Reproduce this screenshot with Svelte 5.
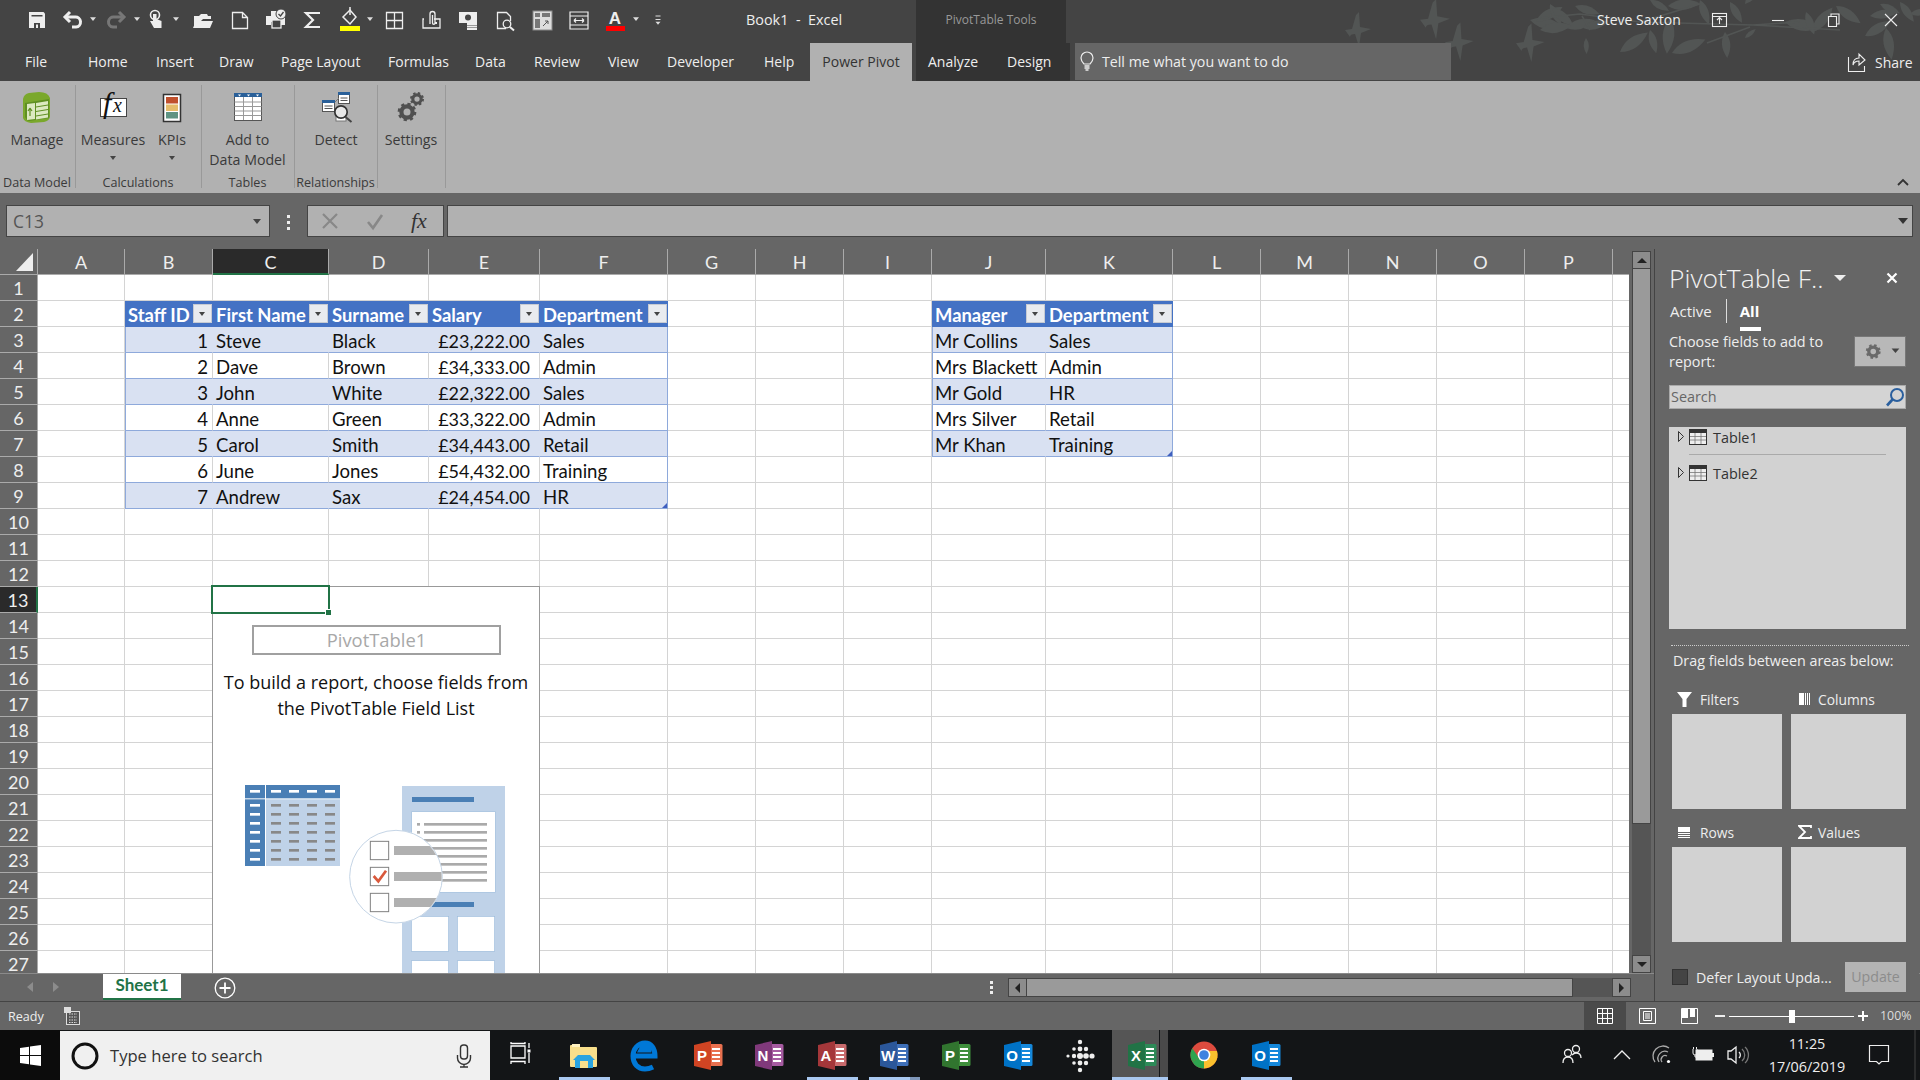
<script>
  const tabs = [
    ['File', 25, 63], ['Home', 88, 68], ['Insert', 156, 63], ['Draw', 219, 62], ['Page Layout', 281, 107],
    ['Formulas', 388, 87], ['Data', 475, 59], ['Review', 534, 74], ['View', 608, 59], ['Developer', 667, 97],
    ['Help', 764, 46]
  ];
  const groups = [
    { w: 76, label: 'Data Model', btns: [{ w: 74, t: ['Manage'], icon: 'manage' }] },
    { w: 126, label: 'Calculations', btns: [{ w: 74, t: ['Measures'], icon: 'fx', caret: true }, { w: 44, t: ['KPIs'], icon: 'kpi', caret: true }] },
    { w: 93, label: 'Tables', btns: [{ w: 91, t: ['Add to', 'Data Model'], icon: 'table' }] },
    { w: 83, label: 'Relationships', btns: [{ w: 82, t: ['Detect'], icon: 'detect' }] },
    { w: 68, label: '', btns: [{ w: 66, t: ['Settings'], icon: 'settings' }] }
  ];
  const edges = [38, 125, 213, 329, 429, 540, 668, 756, 844, 932, 1046, 1173, 1261, 1349, 1437, 1525, 1613, 1700];
  const colNames = 'ABCDEFGHIJKLMNOP '.split('');
  const colTemplate = '38px ' + edges.slice(1).map((e, i) => e - edges[i] + 'px').join(' ');
  const rows = Array.from({ length: 27 }, (_, i) => i + 1);

  const t1 = [
    ['Staff ID', 'First Name', 'Surname', 'Salary', 'Department'],
    ['1', 'Steve', 'Black', '£23,222.00', 'Sales'],
    ['2', 'Dave', 'Brown', '£34,333.00', 'Admin'],
    ['3', 'John', 'White', '£22,322.00', 'Sales'],
    ['4', 'Anne', 'Green', '£33,322.00', 'Admin'],
    ['5', 'Carol', 'Smith', '£34,443.00', 'Retail'],
    ['6', 'June', 'Jones', '£54,432.00', 'Training'],
    ['7', 'Andrew', 'Sax', '£24,454.00', 'HR']
  ];
  const t2 = [
    ['Manager', 'Department'],
    ['Mr Collins', 'Sales'],
    ['Mrs Blackett', 'Admin'],
    ['Mr Gold', 'HR'],
    ['Mrs Silver', 'Retail'],
    ['Mr Khan', 'Training']
  ];

  function cell(c, r) {
    const tables = [
      { data: t1, c0: 1, right: [0, 3] },
      { data: t2, c0: 9, right: [] }
    ];
    for (const t of tables) {
      const x = c - t.c0, y = r - 2;
      const nc = t.data[0].length;
      if (x >= 0 && x < nc && y >= 0 && y < t.data.length) {
        const cl = ['tc'];
        if (y === 0) cl.push('th');
        else if (y % 2 === 1) cl.push('band');
        if (x === 0) cl.push('tfirst');
        if (x === nc - 1) cl.push('tlast');
        if (y > 0 && t.right.includes(x)) cl.push(x === 3 ? 'money' : 'num');
        if (x === nc - 1 && y === t.data.length - 1) cl.push('corner');
        return { text: t.data[y][x], cls: cl.join(' '), head: y === 0 };
      }
    }
    return { text: '', cls: '', head: false };
  }

  const leaves = [
    [1530,20,34,12],[1536,21,30,-28],[1550,4,24,62],[1552,8,28,40],[1566,28,30,-15],[1540,30,32,-8],[1575,6,26,18],[1583,28,26,-14],
    [1586,38,16,88],[1620,52,34,-35],[1650,30,24,75],[1670,18,36,95],[1672,53,36,-22],[1725,32,26,85],[1745,38,14,-40],
    [1668,6,32,-5],[1700,0,26,70],[1730,2,24,60],[1745,4,22,-50],[1650,0,22,30],[1785,22,36,10],[1812,32,32,-50],[1806,12,24,70],
    [1836,6,30,35],[1865,36,30,-30],[1870,16,28,-8],[1886,28,32,80],[1900,2,24,55],[1880,4,22,25],[1910,14,20,-10]
  ];
  const birds = [[1345,18,1],[1420,6,1.15],[1445,29,1.1],[1516,30,1.1]];
  const qatCarets = [93, 137, 176, 370, 636];

  const apps = [
    { x: 708, c: '#d04423', d: '#e8704f', l: 'P' },
    { x: 769, c: '#80397b', d: '#a65ba1', l: 'N' },
    { x: 832, c: '#a4373a', d: '#c86a6c', l: 'A' },
    { x: 894, c: '#2b579a', d: '#3e6fb8', l: 'W' },
    { x: 956, c: '#31752f', d: '#3f8f3c', l: 'P' },
    { x: 1018, c: '#0072c6', d: '#1588db', l: 'O' },
    { x: 1142, c: '#217346', d: '#2d8a57', l: 'X' },
    { x: 1266, c: '#0072c6', d: '#1588db', l: 'O' }
  ];
  const unders = [[559, 51], [807, 51], [869, 41], [1112, 56], [1241, 51]];
  const fit = [
    [1080,1042,2.2],[1080,1049,2.4],[1080,1056,3],[1080,1063,2.4],[1080,1070,2.2],
    [1074,1049,1.8],[1074,1056,2.2],[1074,1063,1.8],[1068,1056,1.6],
    [1086,1049,2.2],[1086,1056,2.8],[1086,1063,2.2],[1092,1056,2.6]
  ];
  const dashRows = [706, 733, 760, 787, 814, 841, 868];
  const dashCols = [213, 267, 321, 375];
  const docLines = [763, 787, 811, 835, 859, 883, 907, 931];
</script>

{#snippet gear(x, y, r, c)}
  <circle cx={x} cy={y} r={r} fill="none" stroke={c} stroke-width={r * 0.75} />
  <circle cx={x} cy={y} r={r * 1.42} fill="none" stroke={c} stroke-width={r * 0.5} stroke-dasharray="{r * 0.56} {r * 0.56}" />
{/snippet}

{#snippet tri(x, y, s, c)}
  <path d="M{x - s} {y - s * 0.55}h{s * 2}L{x} {y + s * 0.65}z" fill={c} />
{/snippet}

{#snippet ribbonIcon(name)}
  <svg class="ri" viewBox="0 0 40 32" width="40" height="32">
    {#if name === 'manage'}
      <path d="M6 7Q7 2 12 1L22 0Q31 0 33 6V25Q32 29 27 30L14 31Q7 30 6 26z" fill="#7aa82b" />
      <path d="M8 11L32 7V26L12 29Q9 28 8 25z" fill="#5f8f22" />
      <path d="M10 12l8-1v16l-8 1zM19 11l12-2v3.500l-12 2zM19 15.500l12-2v3.500l-12 2zM19 20l12-2v3.500l-12 2zM19 24.500l12-2v3l-12 2z" fill="#dce9c0" />
      <path d="M13 24v-8M13 16l-2 3M13 16l2 3" stroke="#5f8f22" stroke-width="1.200" fill="none" />
    {:else if name === 'fx'}
      <rect x="7.500" y="6.500" width="26" height="18" fill="#fff" stroke="#444" />
      <text x="10" y="21" class="fxt">f</text>
      <text x="20" y="20" class="fxs">x</text>
    {:else if name === 'kpi'}
      <rect x="11.500" y="2.500" width="17" height="27" fill="#fff" stroke="#333" stroke-width="1.500" />
      <rect x="14" y="5" width="12" height="6.500" fill="#c0502d" />
      <rect x="14" y="12.500" width="12" height="6.500" fill="#e6bd6b" />
      <rect x="14" y="20" width="12" height="6.500" fill="#5f9483" />
    {:else if name === 'table'}
      <rect x="6.500" y="1.500" width="27" height="27" fill="#fff" stroke="#555" />
      <rect x="6" y="1" width="28" height="4" fill="#2a6099" />
      <path d="M6.500 10h27M6.500 14.500h27M6.500 19h27M6.500 23.500h27M15.500 5v23M24.500 5v23" stroke="#999" fill="none" />
      <path d="M10 2.500h3l-1.500 2zM19 2.500h3l-1.500 2zM28 2.500h3l-1.500 2z" fill="#fff" />
    {:else if name === 'detect'}
      <rect x="6.500" y="8.500" width="12" height="11" fill="#fff" stroke="#555" />
      <rect x="6" y="8" width="13" height="3" fill="#2a6099" />
      <path d="M8.500 14h8M8.500 16.500h8" stroke="#555" />
      <rect x="22.500" y="0.500" width="11" height="11" fill="#fff" stroke="#555" />
      <rect x="22" y="0" width="12" height="3" fill="#2a6099" />
      <path d="M24.500 6h7M24.500 8.500h7" stroke="#555" />
      <path d="M19 10L23 6" stroke="#777" />
      <rect x="20" y="22" width="10" height="7" fill="#fff" stroke="#777" />
      <circle cx="25" cy="20" r="6.200" fill="#e8e8e8" stroke="#333" stroke-width="1.700" />
      <path d="M29.500 25l6 5" stroke="#444" stroke-width="2" />
    {:else if name === 'settings'}
      {@render gear(16, 20, 5.600, '#505050')}
      {@render gear(26, 7, 4.200, '#505050')}
    {/if}
  </svg>
{/snippet}

{#snippet office(a)}
  <path d="M{a.x - 2} 1044h15a1.500 1.500 0 0 1 1.500 1.500v19a1.500 1.500 0 0 1-1.500 1.500h-15z" fill={a.d} />
  <path d="M{a.x + 4} 1049h8M{a.x + 4} 1053h8M{a.x + 4} 1057h8M{a.x + 4} 1061h8" stroke="#fff" stroke-width="2" />
  <path d="M{a.x - 14} 1045L{a.x + 3} 1041V1070L{a.x - 14} 1066z" fill={a.c} />
  <text x={a.x - 6} y="1061" text-anchor="middle" class="appl">{a.l}</text>
{/snippet}

<div class="app">
  <div class="chrome">
    <svg class="deco" viewBox="1320 0 600 81" width="600" height="81" aria-hidden="true">
      <g fill="#525554" stroke="none">
        {#each leaves as l}
          <path d="M0 0Q{l[2] * 0.45} {-l[2] * 0.32} {l[2]} 0Q{l[2] * 0.45} {l[2] * 0.32} 0 0z" transform="translate({l[0]} {l[1]}) rotate({l[3]})" />
        {/each}
        {#each birds as b}
          <path d="M0 12L7 11L11 -3L14 -6L15 9L26 11L16 15L14 29L10 16Q5 16 5 19z" transform="translate({b[0]} {b[1]}) scale({b[2]})" />
        {/each}
      </g>
      <path d="M1540 18L1580 14L1640 22L1753 25L1840 30M1640 22L1700 4M1707 43L1750 27M1582 16L1590 30M1753 25L1800 22" stroke="#525554" stroke-width="1.600" fill="none" />
    </svg>
    <header class="title">
      <svg class="qat" viewBox="0 0 680 40" width="680" height="40" aria-hidden="true">
        <g transform="translate(37 20)">
          <path d="M-8-8H6.500L8-6.500V8H-8z" fill="#eee" />
          <rect x="-5.500" y="-5" width="11" height="1.500" fill="#444" />
          <rect x="-3" y="3" width="6" height="5" fill="#444" />
          <rect x="-1" y="4.500" width="2" height="3.500" fill="#eee" />
        </g>
        <g transform="translate(73 20)" fill="none" stroke="#eee" stroke-width="3">
          <path d="M-7-3H2a5 5 0 0 1 1 10H-1" /><path d="M-3-8L-8-3L-3 2" />
        </g>
        <g transform="translate(116 20)" fill="none" stroke="#777" stroke-width="3">
          <path d="M7-3H-2a5 5 0 0 0-1 10H1" /><path d="M3-8L8-3L3 2" />
        </g>
        <g transform="translate(156 20)" fill="#eee">
          <circle cx="-1" cy="-5" r="4.500" fill="none" stroke="#eee" stroke-width="1.600" />
          <path d="M-3-6h3.500v5l5 2v7h-7.500L-6 1h3z" />
        </g>
        <path d="M194 28V16h5l2-2h6l1 2h3v3h-8l-2 2H196z M193 28l3-7h17l-3 7z" fill="#eee" />
        <path d="M232.500 12.500h10l5 5v11h-15z M242.500 12.500v5h5" fill="none" stroke="#eee" stroke-width="1.300" />
        <g transform="translate(276 20)">
          <path d="M-10-4h5v-5h10v5h4v9h-5v-3h-9v3h-5z" fill="#eee" />
          <rect x="-4" y="0" width="9" height="8" fill="#444" stroke="#eee" stroke-width="1.300" />
          <circle cx="5" cy="-6" r="5" fill="#eee" stroke="#444" />
          <path d="M2.500-6l2 2 3-4" stroke="#444" fill="none" stroke-width="1.300" />
        </g>
        <path d="M320 13H306L313 20L306 27H320" fill="none" stroke="#eee" stroke-width="2.200" />
        <g transform="translate(350 17)" fill="none" stroke="#eee" stroke-width="1.500">
          <path d="M-7 0L0-7L6 0L0 7z" /><path d="M0-2V-10" />
        </g>
        <rect x="340" y="26" width="20" height="5" fill="#ff0" />
        <path d="M386.500 12.500h16v16h-16zM394.500 12.500v16M386.500 20.500h16" fill="none" stroke="#eee" stroke-width="1.300" />
        <g fill="none" stroke="#eee" stroke-width="1.300">
          <path d="M424 19h-1v9h17v-9h-6" /><path d="M430 24V14a2.500 2.500 0 0 1 5 0v9a1.200 1.200 0 0 1-2.500 0v-8" />
        </g>
        <rect x="435" y="22" width="2" height="2" fill="#eee" />
        <g transform="translate(468 20)">
          <rect x="-9" y="-8" width="18" height="11" fill="#eee" />
          <circle cx="0" cy="-2.500" r="3" fill="#444" />
          <path d="M-1 4h10M-1 6.500h10M-1 9h10" stroke="#eee" stroke-width="1.800" />
        </g>
        <g fill="none" stroke="#eee" stroke-width="1.300">
          <path d="M506 28.500h-8.500v-16h9l4 4V21" />
          <circle cx="507" cy="24" r="3.800" /><path d="M510 27l4 3.500" stroke-width="2" />
        </g>
        <rect x="533" y="11" width="19" height="19" fill="#ddd" stroke="#888" />
        <rect x="535" y="13" width="5" height="4" fill="#777" /><rect x="535" y="19" width="5" height="9" fill="#777" /><rect x="542" y="13" width="8" height="4" fill="#777" />
        <path d="M543 26l5-5M548 21v3M548 21h-3" stroke="#555" fill="none" />
        <path d="M570 12h18v17h-18zM570 16h18M570 25h18M574 20.500h10M574 20.500l2-2M574 20.500l2 2M584 20.500l-2-2M584 20.500l-2 2" fill="none" stroke="#eee" stroke-width="1.200" />
        <text x="615" y="24" text-anchor="middle" class="qa">A</text>
        <rect x="606" y="26" width="19" height="5" fill="#f00" />
        {#each qatCarets as c}
          {@render tri(c, 19, 3, '#ddd')}
        {/each}
        <path d="M655.500 16h5M655.500 19.500h5" stroke="#ddd" /> {@render tri(658, 23, 2.500, '#ddd')}
      </svg>
      <span class="book">Book1&nbsp; -&nbsp; Excel</span>
      <div class="ctx">PivotTable Tools</div>
      <span class="user">Steve Saxton</span>
      <svg class="winbtn" viewBox="0 0 210 30" width="210" height="30" aria-hidden="true">
        <g fill="none" stroke="#eee" stroke-width="1.100">
          <rect x="5.500" y="8.500" width="14" height="13" /><path d="M5.500 11.500h14M12.500 19v-6M10 15l2.500-2.500L15 15" />
          <path d="M65 15.500h12" />
          <path d="M121.500 11.500h8v10h-8zM124 11V9h8v10h-2" />
          <path d="M178 9l12 12M190 9l-12 12" />
        </g>
      </svg>
    </header>

    <nav class="tabs">
      <div class="tabpad"></div>
      {#each tabs as t}
        <span class="tab" style="width:{t[2]}px">{t[0]}</span>
      {/each}
      <span class="tab active">Power Pivot</span>
      <div class="ctxtabs">
        <span class="tab" style="width:79px">Analyze</span>
        <span class="tab" style="width:59px">Design</span>
      </div>
      <div class="tell">
        <svg viewBox="0 0 16 22" width="16" height="22" aria-hidden="true">
          <path d="M5 14C3 12 2 10 2 8a6 6 0 0 1 12 0c0 2-1 4-3 6z" fill="none" stroke="#eee" stroke-width="1.200" />
          <path d="M5.500 16h5M5.500 18h5M6.500 20h3" stroke="#eee" stroke-width="1.400" />
        </svg>
        <span>Tell me what you want to do</span>
      </div>
      <div class="share">
        <svg viewBox="0 0 20 22" width="20" height="22" aria-hidden="true">
          <path d="M1.500 6v14.500h16V15M6 14c0-5 3-7 6-7V3l6 6-6 5v-4c-3 0-5 1-6 4z" fill="none" stroke="#eee" stroke-width="1.100" />
        </svg>
        <span>Share</span>
      </div>
    </nav>
  </div>

  <section class="ribbon">
    {#each groups as g}
      <div class="group" style="width:{g.w}px">
        <div class="btns">
          {#each g.btns as b}
            <div class="rbtn" style="width:{b.w}px">
              {@render ribbonIcon(b.icon)}
              {#each b.t as line}<span class="rl">{line}</span>{/each}
              {#if b.caret}<i class="rcaret"></i>{/if}
            </div>
          {/each}
        </div>
        <div class="glabel">{g.label}</div>
      </div>
    {/each}
    <svg class="collapse" viewBox="0 0 12 8" width="12" height="8" aria-hidden="true"><path d="M1 7L6 2l5 5" fill="none" stroke="#333" stroke-width="1.800" /></svg>
  </section>

  <section class="fbar">
    <div class="namebox"><span>C13</span><i class="fcaret"></i></div>
    <div class="fdots"><b></b><b></b><b></b></div>
    <div class="fxbox">
      <svg viewBox="0 0 135 30" width="135" height="30" aria-hidden="true">
        <path d="M15 8l14 14M29 8L15 22" stroke="#888" stroke-width="2.200" fill="none" />
        <path d="M60 16l5 6 9-13" stroke="#888" stroke-width="2.600" fill="none" />
        <text x="103" y="22" class="fxi">fx</text>
      </svg>
    </div>
    <div class="finput"><i class="fcaret2"></i></div>
  </section>

  <main class="main">
    <div class="sheet">
      <div class="grid" style="grid-template-columns:{colTemplate}">
        <div class="corner-h"><span></span></div>
        {#each colNames as c}
          <div class="ch" class:sel={c === 'C'}>{c}</div>
        {/each}
        {#each rows as r}
          <div class="rh" class:sel={r === 13}>{r}</div>
          {#each colNames as c, ci}
            {@const k = cell(ci, r)}
            <div class="c {k.cls}">
              <span>{k.text}</span>
              {#if k.head}<i class="fb"></i>{/if}
            </div>
          {/each}
        {/each}
      </div>

      <div class="pivot">
        <div class="pname">PivotTable1</div>
        <p class="pmsg">To build a report, choose fields from<br />the PivotTable Field List</p>
        <svg class="pill" viewBox="0 0 1080 1260" width="360" height="420" aria-hidden="true">
          <defs><clipPath id="lens"><circle cx="588" cy="920" r="137" /></clipPath></defs>
          <rect x="135" y="645" width="60" height="40" fill="#4a7fb5" />
          <rect x="198" y="645" width="222" height="40" fill="#4a7fb5" />
          <rect x="135" y="688" width="60" height="200" fill="#4a7fb5" />
          <rect x="198" y="688" width="222" height="200" fill="#bfd2e8" />
          <rect x="150" y="660" width="30" height="8" fill="#fff" />
          {#each dashCols as x}<rect {x} y="660" width="30" height="8" fill="#fff" />{/each}
          {#each dashRows as y}
            <rect x="150" y={y - 4} width="30" height="8" fill="#fff" />
            {#each dashCols as x}<rect {x} y={y - 4} width="30" height="8" fill="#888" />{/each}
          {/each}
          <rect x="606" y="648" width="309" height="620" fill="#bfd2e8" />
          <rect x="636" y="681" width="186" height="15" fill="#4a7fb5" />
          <rect x="635" y="725" width="251" height="242" fill="#fff" stroke="#9dbcdc" stroke-width="2" />
          {#each docLines as y}<rect x="672" y={y - 4} width="189" height="8" fill="#aaa" />{/each}
          <rect x="651" y="759" width="9" height="8" fill="#aaa" /><rect x="651" y="783" width="9" height="8" fill="#aaa" />
          <rect x="636" y="996" width="186" height="15" fill="#4a7fb5" />
          <rect x="634" y="1039" width="112" height="105" fill="#fff" stroke="#9dbcdc" stroke-width="2" />
          <rect x="772" y="1039" width="112" height="105" fill="#fff" stroke="#9dbcdc" stroke-width="2" />
          <rect x="634" y="1172" width="112" height="105" fill="#fff" stroke="#9dbcdc" stroke-width="2" />
          <rect x="772" y="1172" width="112" height="105" fill="#fff" stroke="#9dbcdc" stroke-width="2" />
          <circle cx="588" cy="920" r="139" fill="#fff" stroke="#c5d5e6" stroke-width="3" />
          <g clip-path="url(#lens)">
            <rect x="582" y="828" width="170" height="27" fill="#b0b0b0" />
            <rect x="582" y="906" width="170" height="27" fill="#b0b0b0" />
            <rect x="582" y="984" width="170" height="27" fill="#b0b0b0" />
          </g>
          <rect x="511" y="814" width="55" height="55" fill="#fff" stroke="#808080" stroke-width="3" />
          <rect x="511" y="892" width="55" height="55" fill="#fff" stroke="#808080" stroke-width="3" />
          <rect x="511" y="970" width="55" height="55" fill="#fff" stroke="#808080" stroke-width="3" />
          <path d="M521 918l14 16 23-32" fill="none" stroke="#d9593c" stroke-width="8" />
        </svg>
      </div>
      <div class="active-cell"><i></i></div>
    </div>

    <div class="vscroll">
      <div class="sbtn"><i class="up"></i></div>
      <div class="thumb"></div>
      <div class="track"></div>
      <div class="sbtn"><i class="down"></i></div>
    </div>

    <aside class="panel">
      <div class="ptitle">
        <span>PivotTable F..</span>
        <i class="pcaret"></i>
        <svg viewBox="0 0 12 12" width="12" height="12" aria-hidden="true"><path d="M1.500 1.500l9 9M10.500 1.500l-9 9" stroke="#fff" stroke-width="2.200" /></svg>
      </div>
      <div class="ptabs">
        <span class="pa">Active</span>
        <span class="psep"></span>
        <span class="pall">All</span>
      </div>
      <div class="pchoose">
        <span>Choose fields to add to<br />report:</span>
        <div class="pgear">
          <svg viewBox="0 0 50 30" width="50" height="29" aria-hidden="true">
            {@render gear(18, 15, 4.600, '#6a6a6a')}
            {@render tri(41, 14, 4, '#444')}
          </svg>
        </div>
      </div>
      <div class="psearch">
        <span>Search</span>
        <svg viewBox="0 0 20 22" width="20" height="22" aria-hidden="true">
          <circle cx="12" cy="9" r="6" fill="none" stroke="#2a5f9e" stroke-width="2" /><path d="M7.500 13.500L2 19.500" stroke="#2a5f9e" stroke-width="2.600" />
        </svg>
      </div>
      <div class="plist">
        {#each ['Table1', 'Table2'] as t, i}
          <div class="pitem" class:sepd={i === 0}>
            <svg viewBox="0 0 36 18" width="36" height="18" aria-hidden="true">
              <path d="M5.500 3.500l5 5-5 5z" fill="none" stroke="#333" />
              <rect x="16.500" y="1.500" width="17" height="15" fill="#eee" stroke="#333" />
              <rect x="16" y="1" width="18" height="4" fill="#333" />
              <path d="M17 8.500h16M17 12h16M22 5v11M28 5v11" stroke="#777" stroke-width=".8" />
            </svg>
            <span>{t}</span>
          </div>
        {/each}
      </div>
      <div class="pdots"></div>
      <div class="pdrag">Drag fields between areas below:</div>
      <div class="pareas">
        <div class="area">
          <div class="ah">
            <svg viewBox="0 0 15 15" width="15" height="15" aria-hidden="true"><path d="M0 0h15L9.500 7v8h-4V7z" fill="#fff" /></svg>
            <span>Filters</span>
          </div>
          <div class="ab"></div>
        </div>
        <div class="area r">
          <div class="ah">
            <svg viewBox="0 0 15 15" width="15" height="15" aria-hidden="true"><path d="M1 1h5v12H1zM7 1h1v12H7zM9 1h1v12H9zM11 1h1v12h-1z" fill="#fff" /></svg>
            <span>Columns</span>
          </div>
          <div class="ab"></div>
        </div>
        <div class="area">
          <div class="ah">
            <svg viewBox="0 0 15 15" width="15" height="15" aria-hidden="true"><path d="M1 2h12v5H1zM1 8h12v1H1zM1 10h12v1H1zM1 12h12v1H1z" fill="#fff" /></svg>
            <span>Rows</span>
          </div>
          <div class="ab"></div>
        </div>
        <div class="area r">
          <div class="ah">
            <svg viewBox="0 0 15 15" width="15" height="15" aria-hidden="true"><path d="M13 3V1H1l6 6-6 6h12v-2" fill="none" stroke="#fff" stroke-width="1.800" /></svg>
            <span>Values</span>
          </div>
          <div class="ab"></div>
        </div>
      </div>
      <div class="pdefer">
        <i class="chk"></i>
        <span>Defer Layout Upda...</span>
        <div class="upd">Update</div>
      </div>
    </aside>
  </main>

  <section class="sheetbar">
    <div class="nav"><i class="l"></i><i class="rr"></i></div>
    <div class="stab">Sheet1</div>
    <svg class="addsheet" viewBox="0 0 22 22" width="22" height="22" aria-hidden="true">
      <circle cx="11" cy="11" r="9.800" fill="none" stroke="#fff" stroke-width="1.300" /><path d="M11 5.500v11M5.500 11h11" stroke="#fff" stroke-width="1.800" />
    </svg>
    <div class="hdots"><b></b><b></b><b></b></div>
    <div class="hscroll">
      <div class="hbtn"><i class="hl"></i></div>
      <div class="hthumb"></div>
      <div class="htrack"></div>
      <div class="hbtn"><i class="hr"></i></div>
    </div>
  </section>

  <footer class="status">
    <span class="ready">Ready</span>
    <svg class="macro" viewBox="0 0 18 20" width="18" height="20" aria-hidden="true">
      <rect x="3.500" y="5.500" width="13" height="13" fill="#555" stroke="#ddd" />
      <rect x="1" y="1" width="7" height="6" fill="#ddd" /><path d="M6 8h8M6 11h8M6 14h8M6 16.500h8" stroke="#ddd" stroke-dasharray="1.500 1" />
    </svg>
    <div class="views">
      <div class="vbtn on">
        <svg viewBox="0 0 16 16" width="16" height="16" aria-hidden="true"><path d="M.5.500h15v15H.5zM5.500.500v15M10.500.500v15M.5 5.500h15M.5 10.500h15" fill="none" stroke="#fff" /></svg>
      </div>
      <div class="vbtn">
        <svg viewBox="0 0 17 16" width="17" height="16" aria-hidden="true"><path d="M.5.500h16v15H.5zM4.500 3.500h8v9h-8zM6 6h5M6 8h5M6 10h5" fill="none" stroke="#fff" /></svg>
      </div>
      <div class="vbtn">
        <svg viewBox="0 0 17 16" width="17" height="16" aria-hidden="true"><path d="M.5.500h16v15H.5z" fill="none" stroke="#fff" /><path d="M1 1h6v9H1zM9 1h5v8H9z" fill="#fff" /></svg>
      </div>
    </div>
    <div class="zoomctl">
      <b class="zm"></b>
      <div class="zline"><i></i></div>
      <svg viewBox="0 0 10 10" width="10" height="10" aria-hidden="true"><path d="M5 0v10M0 5h10" stroke="#fff" stroke-width="2" /></svg>
    </div>
    <span class="pct">100%</span>
  </footer>

  <footer class="taskbar">
    <div class="start">
      <svg viewBox="0 0 21 21" width="21" height="21" aria-hidden="true"><path d="M0 3l9-1.300V10H0zM10 1.500L21 0v10H10zM0 11h9v8.300L0 18zM10 11h11v10l-11-1.500z" fill="#fff" /></svg>
    </div>
    <div class="search">
      <svg viewBox="0 0 30 30" width="30" height="30" aria-hidden="true"><circle cx="15" cy="15" r="12" fill="none" stroke="#111" stroke-width="3" /></svg>
      <span>Type here to search</span>
      <svg class="mic" viewBox="0 0 16 24" width="16" height="24" aria-hidden="true">
        <rect x="4.500" y="1" width="7" height="14" rx="3" fill="none" stroke="#333" stroke-width="1.400" /><path d="M1.500 11v3a6.500 6.500 0 0 0 13 0v-3M8 20.500V23M4 23h8" fill="none" stroke="#333" stroke-width="1.400" />
      </svg>
    </div>
    <svg class="strip" viewBox="490 1030 1272 50" width="1272" height="50" aria-hidden="true">
      <rect x="1112" y="1030" width="47" height="50" fill="#555" />
      <rect x="1160" y="1030" width="8" height="50" fill="#4a4a4a" />
      <path d="M511 1046h14v12h-14zM511 1042v1.500h14V1042M511 1064v-2.500h14v2.500M529 1043v5M529 1053v10" fill="none" stroke="#fff" stroke-width="1.300" />
      <rect x="527.500" y="1049.500" width="3" height="3" fill="#fff" />

      <path d="M570 1046a1 1 0 0 1 1-1h6l2 2h17a1 1 0 0 1 1 1v18a1 1 0 0 1-1 1h-25a1 1 0 0 1-1-1z" fill="#f8df8b" />
      <rect x="572" y="1044" width="8" height="3" fill="#fff2c0" />
      <path d="M575 1068v-8l-2 0 5-5h12l5 5h-2v8z" fill="#2aa4e0" />
      <rect x="580" y="1061" width="8" height="7" fill="#f8df8b" />

      <path d="M635 1056h20c0-8-4-13-10-13-7 0-12 6-12 13 0 8 5 13 12 13 3 0 6-1 8-2M641 1050c1-2 2-3 4-3 2 0 4 1 4 3z" fill="none" stroke="#0078d7" stroke-width="5" />

      {#each apps as a}{@render office(a)}{/each}
      {#each fit as f}<circle cx={f[0]} cy={f[1]} r={f[2]} fill="#eee" />{/each}

      <circle cx="1204" cy="1055" r="13.500" fill="#dd4b3e" />
      <path d="M1204 1055L1192.300 1061.700A13.500 13.500 0 0 0 1204 1068.500z" fill="#2ea44f" />
      <path d="M1192.300 1061.700A13.500 13.500 0 0 1 1192.300 1048.300L1199 1058z" fill="#2ea44f" />
      <path d="M1204 1055V1068.500A13.500 13.500 0 0 0 1217 1051H1204z" fill="#fbc02d" />
      <circle cx="1204" cy="1055" r="6.300" fill="#fff" />
      <circle cx="1204" cy="1055" r="4.800" fill="#3f82e0" />

      {#each unders as u}<rect x={u[0]} y="1077" width={u[1]} height="3" fill="#a9c8f0" />{/each}
      <rect x="910" y="1077" width="10" height="3" fill="#7f97ba" />

      <g fill="none" stroke="#eee" stroke-width="1.300">
        <circle cx="1568" cy="1053" r="3.500" /><path d="M1563 1063c0-4 2-6 5-6s5 2 5 6" />
        <circle cx="1576" cy="1049" r="3.500" /><path d="M1572 1055c1-1 2-2 4-2 3 0 5 2 5 5" />
        <path d="M1614 1059l8-8 8 8" />
        <path d="M1655 1062a10 10 0 0 1 14-14M1659 1062a7 7 0 0 1 9-10M1662 1062a4 4 0 0 1 5-6" stroke="#aaa" />
        <path d="M1728 1051h3l5-4v16l-5-4h-3z" />
        <path d="M1739 1052a4 4 0 0 1 0 6" /><path d="M1742 1049a8 8 0 0 1 0 12M1745 1047a11 11 0 0 1 0 16" stroke="#777" />
      </g>
      <circle cx="1668.500" cy="1061.500" r="1.600" fill="#fff" />
      <rect x="1696" y="1050" width="16" height="10" fill="#eee" stroke="#eee" /><rect x="1712" y="1053" width="2" height="4" fill="#eee" />
      <path d="M1693 1049v4a2 2 0 0 0 4 0v-4M1693.500 1049v-2M1696.500 1049v-2M1695 1055v2h2" fill="none" stroke="#eee" />
    </svg>
    <div class="clock"><span>11:25</span><span>17/06/2019</span></div>
    <svg class="notif" viewBox="0 0 68 50" width="68" height="50" aria-hidden="true">
      <path d="M17.500 15.500h19v16h-7l-2.500 2.500-2.500-2.500h-7z" fill="none" stroke="#eee" stroke-width="1.200" />
      <path d="M63 0v50" stroke="#444" />
    </svg>
  </footer>
</div>

<style>
  :global(body) { margin: 0; background: #666; }
  .app {
    width: 1920px; height: 1080px; display: flex; flex-direction: column; overflow: hidden;
    font-family: "Open Sans", "Noto Sans", sans-serif; font-size: 14px; color: #eee; background: #666;
  }
  svg { display: block; flex: none; }
  i, b { display: block; }

  .chrome { height: 81px; flex: none; background: #444; position: relative; }
  .deco { position: absolute; left: 0; top: 0; transform: translateX(1320px); }
  .title { height: 43px; position: relative; display: flex; align-items: center; }
  .qat { position: absolute; left: 0; top: 0; }
  .qa { font: 700 17px "Liberation Sans", sans-serif; fill: #eee; }
  .book { position: absolute; left: 746px; top: 10px; font-size: 14.4px; line-height: 20px; white-space: nowrap; }
  .ctx { position: absolute; left: 916px; top: 0; width: 150px; height: 43px; background: #333; color: #999; font-size: 12px; line-height: 40px; text-align: center; box-sizing: border-box; }
  .user { position: absolute; left: 1597px; top: 10px; font-size: 14px; line-height: 20px; white-space: nowrap; }
  .winbtn { position: absolute; left: 1707px; top: 5px; }

  .tabs { height: 38px; position: relative; display: flex; align-items: stretch; }
  .tabpad { width: 25px; flex: none; }
  .tab { display: flex; align-items: center; flex: none; white-space: nowrap; font-size: 14px; box-sizing: border-box; padding-bottom: 2px; }
  .tab.active { width: 102px; background: #b1b1b1; color: #333; justify-content: center; }
  .ctxtabs { display: flex; width: 154px; margin-left: 4px; padding-left: 12px; box-sizing: border-box; background: #333; }
  .tell {
    width: 376px; margin: 0 0 1px 5px; background: #666; display: flex; align-items: center; gap: 7px; padding: 0 0 1px 4px; box-sizing: border-box;
    font-size: 14.2px; color: #eee; position: relative;
  }
  .share { position: absolute; left: 1847px; top: 8px; display: flex; align-items: center; gap: 8px; font-size: 14px; }

  .ribbon { height: 112px; background: #b1b1b1; position: relative; flex: none; display: flex; color: #3a3a3a; padding-top: 4px; box-sizing: border-box; }
  .group { flex: none; height: 103px; box-sizing: border-box; border-right: 1px solid #999; display: flex; flex-direction: column; align-items: stretch; }
  .btns { display: flex; height: 90px; flex: none; }
  .rbtn { flex: none; display: flex; flex-direction: column; align-items: center; padding-top: 7px; box-sizing: border-box; }
  .ri { margin-bottom: 6px; overflow: visible; }
  .rl { font-size: 14.2px; line-height: 20px; white-space: nowrap; }
  .rcaret { width: 0; height: 0; margin-top: 6px; border: 3px solid transparent; border-top: 4px solid #444; border-bottom: 0; }
  .glabel { font-size: 12.6px; line-height: 16px; flex: none; text-align: center; white-space: nowrap; padding-right: 1px; }
  .fxt { font: italic 30px "Liberation Serif", serif; fill: #111; }
  .fxs { font: italic 20px "Liberation Serif", serif; fill: #111; }
  .collapse { position: absolute; left: 1897px; top: 97px; }

  .fbar { height: 56px; flex: none; box-sizing: border-box; padding-top: 12px; display: flex; align-items: flex-start; background: #666; }
  .namebox { margin-left: 6px; width: 264px; height: 32px; box-sizing: border-box; border: 1px solid #444; background: #b1b1b1; display: flex; align-items: center; justify-content: space-between; padding: 0 8px 0 6px; color: #555; font-size: 17.4px; }
  .fcaret { width: 0; height: 0; border: 4px solid transparent; border-top: 5px solid #444; border-bottom: 0; }
  .fdots { width: 37px; display: flex; flex-direction: column; align-items: center; gap: 3px; padding-top: 10px; }
  .fdots b, .hdots b { width: 3px; height: 3px; background: #eee; }
  .fxbox { width: 137px; height: 32px; box-sizing: border-box; border: 1px solid #444; background: #b1b1b1; }
  .fxi { font: italic 22px "Liberation Serif", serif; fill: #333; }
  .finput { margin-left: 3px; width: 1466px; height: 32px; box-sizing: border-box; border: 1px solid #444; background: #b1b1b1; position: relative; }
  .fcaret2 { position: absolute; right: 4px; top: 12px; width: 0; height: 0; border: 5px solid transparent; border-top: 6px solid #333; border-bottom: 0; }

  .main { flex: none; height: 724px; display: flex; background: #666; }
  .sheet { width: 1629px; flex: none; position: relative; overflow: hidden; background: #fff; }
  .grid { display: grid; grid-auto-rows: 26px; font-family: Lato, "Liberation Sans", sans-serif; font-size: 18.6px; color: #111; }
  .corner-h { background: #666; border-bottom: 1px solid #aaa; border-right: 1px solid #aaa; box-sizing: border-box; position: relative; }
  .corner-h span { position: absolute; left: 16px; top: 4px; width: 0; height: 0; border-style: solid; border-width: 0 0 18px 17px; border-color: transparent transparent #eee transparent; }
  .ch, .rh { background: #666; color: #eee; display: flex; align-items: center; justify-content: center; box-sizing: border-box; border-bottom: 1px solid #aaa; border-right: 1px solid #aaa; font-size: 18px; }
  .ch { padding-top: 1px; }
  .rh { padding-top: 1px; }
  .ch.sel { background: #2a2a2a; border-bottom: 2px solid #217346; }
  .rh.sel { background: #2a2a2a; border-right: 2px solid #217346; }
  .c { box-sizing: border-box; border-right: 1px solid #d4d4d4; border-bottom: 1px solid #d4d4d4; background: #fff; position: relative; padding: 2px 3px 0; display: flex; align-items: center; white-space: nowrap; overflow: hidden; }
  .tc { border-bottom-color: #8ea9db; }
  .tfirst { border-left: 1px solid #8ea9db; padding-left: 2px; }
  .tlast { border-right-color: #8ea9db; }
  .band { background: #d9e1f2; border-right-color: #d9e1f2; }
  .band.tlast { border-right-color: #8ea9db; }
  .th { background: #4472c4; color: #fff; font-weight: 700; font-size: 18.4px; border-right-color: #4472c4; border-bottom-color: #4472c4; border-left-color: #4472c4; }
  .num { justify-content: flex-end; padding-right: 4px; }
  .money { justify-content: flex-end; padding-right: 9px; font-size: 18px; }
  .corner::after { content: ""; position: absolute; right: 0; bottom: 0; border-style: solid; border-width: 0 0 5px 5px; border-color: transparent transparent #3f5fbf transparent; }
  .fb { position: absolute; right: 0; top: 3px; width: 19px; height: 19px; box-sizing: border-box; background: #e9ebef; border: 1px solid #c7cbd3; }
  .fb::after { content: ""; position: absolute; left: 5px; top: 7px; border: 3.5px solid transparent; border-top: 4px solid #444; border-bottom: 0; }

  .pivot { position: absolute; left: 212px; top: 337px; width: 328px; height: 420px; box-sizing: border-box; background: #fff; border: 1px solid #999; border-width: 1px 1px 0; }
  .pname { position: absolute; left: 39px; top: 38px; width: 249px; height: 30px; box-sizing: border-box; border: 2px solid #a0a0a0; color: #a8a8a8; font-size: 18.4px; text-align: center; line-height: 26px; }
  .pmsg { position: absolute; left: 0; top: 82px; width: 100%; margin: 0; text-align: center; color: #111; font-size: 18px; line-height: 26px; white-space: nowrap; }
  .pill { position: absolute; left: -13px; top: -17px; }
  .active-cell { position: absolute; left: 211px; top: 336px; width: 119px; height: 29px; box-sizing: border-box; border: 2px solid #217346; }
  .active-cell i { position: absolute; right: -4px; bottom: -4px; width: 5px; height: 5px; background: #217346; border: 1px solid #fff; }

  .vscroll { width: 19px; margin-left: 3px; flex: none; padding-top: 2px; height: 724px; box-sizing: border-box; display: flex; flex-direction: column; }
  .sbtn { height: 18px; flex: none; background: #8c8c8c; border: 1px solid #444; box-sizing: border-box; display: flex; align-items: center; justify-content: center; }
  .up { border: 5px solid transparent; border-bottom: 5px solid #222; border-top: 0; }
  .down { border: 5px solid transparent; border-top: 5px solid #222; border-bottom: 0; }
  .thumb { height: 555px; flex: none; background: #9a9a9a; border: 1px solid #444; border-top: 0; box-sizing: border-box; }
  .track { flex: 1; background: #555; }

  .panel { width: 265px; height: 752px; margin-left: 3px; flex: none; position: relative; z-index: 1; border-left: 1px solid #444; box-sizing: border-box; padding-top: 13px; background: #666; color: #eee; font-size: 14.4px; }
  .ptitle { height: 32px; display: flex; align-items: center; padding-left: 14px; color: #f2f2f2; font-size: 26.4px; font-weight: 300; white-space: nowrap; }
  .ptitle span { width: 165px; }
  .pcaret { border: 6px solid transparent; border-top: 6px solid #eee; border-bottom: 0; margin-right: 40px; }
  .ptabs { display: flex; height: 33px; margin-top: 5px; padding-left: 15px; align-items: flex-start; line-height: 24px; font-size: 15px; }
  .psep { width: 1px; height: 24px; background: #ddd; margin: 0 13px 0 14px; }
  .pall { font-weight: 700; color: #fff; position: relative; }
  .pall::after { content: ""; position: absolute; left: 0; right: -2px; top: 28px; height: 4px; background: #fff; }
  .pchoose { height: 40px; display: flex; justify-content: space-between; padding: 0 14px 0 14px; line-height: 20px; }
  .pgear { width: 50px; height: 29px; margin-top: 4px; background: #b8b8b8; border: 1px solid #777; margin-right: -1px; }
  .psearch { margin: 13px 0 0 14px; width: 237px; height: 24px; box-sizing: border-box; background: #d4d4d4; border: 1px solid #aaa; display: flex; justify-content: space-between; align-items: center; padding: 0 0 1px 1px; color: #666; }
  .plist { margin: 18px 0 0 14px; width: 237px; height: 202px; background: #d2d2d2; color: #333; box-sizing: border-box; }
  .pitem { height: 36px; display: flex; align-items: flex-start; padding: 2px 0 0 4px; position: relative; box-sizing: border-box; }
  .pitem svg { margin-right: 4px; margin-top: -1px; }
  .pitem span { line-height: 18px; }
  .pitem.sepd::after { content: ""; position: absolute; left: 20px; width: 197px; top: 27px; height: 1px; background: #aaa; }
  .pdots { margin: 16px 0 0 16px; width: 238px; border-top: 1px dotted #ccc; }
  .pdrag { margin: 5px 0 0 18px; line-height: 20px; font-size: 14.3px; white-space: nowrap; }
  .pareas { display: grid; grid-template-columns: 110px 115px; column-gap: 9px; margin: 17px 0 0 17px; row-gap: 12px; }
  .ah { height: 26px; display: flex; align-items: center; gap: 8px; padding: 0 0 3px 5px; font-size: 13.8px; box-sizing: border-box; }
  .area.r .ah { padding-left: 7px; gap: 5px; }
  .ab { height: 95px; background: #d2d2d2; }
  .pdefer { display: flex; align-items: center; margin: 20px 0 0 17px; white-space: nowrap; font-size: 14.2px; }
  .chk { width: 16px; height: 16px; flex: none; box-sizing: border-box; background: #444; border: 1px solid #333; margin-right: 8px; }
  .pdefer span { width: 149px; flex: none; }
  .upd { width: 61px; height: 30px; flex: none; background: #b4b4b4; color: #8c8c8c; text-align: center; line-height: 30px; box-sizing: border-box; }

  .sheetbar { height: 29px; flex: none; position: relative; background: #666; border-top: 1px solid #8a8a8a; border-bottom: 1px solid #444; box-sizing: border-box; display: flex; }
  .nav { width: 103px; display: flex; gap: 20px; padding: 8px 0 0 27px; box-sizing: border-box; }
  .l { border: 5px solid transparent; border-right: 6px solid #8c8c8c; border-left: 0; height: 0; }
  .rr { border: 5px solid transparent; border-left: 6px solid #8c8c8c; border-right: 0; height: 0; }
  .stab { width: 78px; height: 26px; background: #fff; border-bottom: 2px solid #217346; box-sizing: border-box; color: #217346; font: 700 17px Lato, sans-serif; text-align: center; line-height: 21px; }
  .addsheet { margin: 3px 0 0 33px; }
  .hdots { position: absolute; left: 990px; top: 7px; display: flex; flex-direction: column; gap: 2px; }
  .hscroll { position: absolute; left: 1008px; top: 4px; width: 623px; height: 19px; display: flex; }
  .hbtn { width: 19px; flex: none; background: #8c8c8c; border: 1px solid #444; box-sizing: border-box; display: flex; align-items: center; justify-content: center; }
  .hl { border: 5px solid transparent; border-right: 5px solid #222; border-left: 0; }
  .hr { border: 5px solid transparent; border-left: 5px solid #222; border-right: 0; }
  .hthumb { width: 546px; flex: none; background: #9a9a9a; border: 1px solid #444; border-left: 0; box-sizing: border-box; }
  .htrack { flex: 1; background: #555; }

  .status { height: 28px; flex: none; background: #666; display: flex; align-items: center; position: relative; font-size: 12.6px; color: #eee; }
  .ready { margin-left: 8px; width: 55px; }
  .views { position: absolute; left: 1584px; top: 0; height: 28px; display: flex; }
  .vbtn { width: 42px; height: 28px; display: flex; align-items: center; justify-content: center; }
  .vbtn.on { background: #4a4a4a; }
  .zoomctl { position: absolute; left: 1715px; top: 9px; display: flex; align-items: center; gap: 4px; height: 10px; }
  .zm { width: 10px; height: 2.500px; background: #eee; }
  .zline { width: 125px; height: 1px; background: #fff; position: relative; }
  .zline i { position: absolute; left: 60px; top: -6px; width: 6px; height: 13px; background: #fff; }
  .pct { position: absolute; left: 1880px; top: 5px; font-size: 12.4px; color: #ddd; line-height: 18px; }

  .taskbar { height: 50px; flex: none; display: flex; background: #131517; }
  .start { width: 60px; flex: none; background: #0c0c0c; display: flex; align-items: center; justify-content: center; }
  .search { width: 430px; flex: none; background: #f0f0f0; margin-top: 1px; display: flex; align-items: center; box-sizing: border-box; padding-left: 10px; color: #333; font-size: 16.6px; position: relative; }
  .search span { margin-left: 10px; }
  .mic { position: absolute; left: 396px; top: 13px; }
  .clock { width: 90px; flex: none; display: flex; flex-direction: column; align-items: center; justify-content: center; font-size: 14.4px; line-height: 23px; color: #eee; }
  .appl { font: 700 15px "Liberation Sans", sans-serif; fill: #fff; }
</style>
